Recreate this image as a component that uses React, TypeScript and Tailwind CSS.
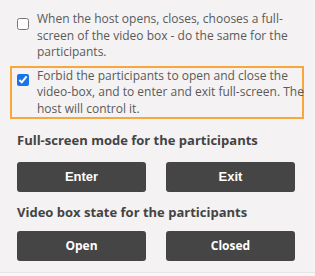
import { useState } from "react";

function Btn({ label, arial }: { label: string; arial?: boolean }) {
  return (
    <button
      className={`h-[30px] w-[129px] rounded-[3px] bg-[#454545] text-[12px] font-bold text-white ${
        arial ? "font-['Liberation_Sans',sans-serif] text-[13px]" : ""
      }`}
    >
      {label}
    </button>
  );
}

export default function App() {
  const [syncHost, setSyncHost] = useState(false);
  const [forbid, setForbid] = useState(true);

  return (
    <div className="h-[276px] w-[315px] overflow-hidden bg-[#f4f2f2] font-['Open_Sans',sans-serif] text-[#5a5a5a]">
      <div className="pt-[11px]">
        <label className="flex gap-[8px] pl-[17px] pr-[20px] text-[12px] leading-[16.5px]">
          <input
            type="checkbox"
            checked={syncHost}
            onChange={(e) => setSyncHost(e.target.checked)}
            className="mt-[7px] h-[12px] w-[12px] shrink-0 accent-[#1a73e8]"
          />
          <span>
            When the host opens, closes, chooses a full-screen of the video box - do the same for the
            participants.
          </span>
        </label>

        <label className="ml-[10px] mt-[5px] flex w-[294px] gap-[8px] border-2 border-[#f8a73d] pl-[5px] pr-0 text-[12px] leading-[16.5px]">
          <input
            type="checkbox"
            checked={forbid}
            onChange={(e) => setForbid(e.target.checked)}
            className="mt-[6px] h-[12px] w-[12px] shrink-0 accent-[#1a73e8]"
          />
          <span className="-mr-[2px]">
            Forbid the participants to open and close the video-box, and to enter and exit
            full-screen. The host will control it.
          </span>
        </label>

        <div className="px-[17px]">
          <h3 className="mt-[11px] text-[13px] font-bold leading-[20px] text-[#444]">
            Full-screen mode for the participants
          </h3>
          <div className="mt-[12px] flex gap-[20px]">
            <Btn label="Enter" arial />
            <Btn label="Exit" arial />
          </div>

          <h3 className="mt-[10px] text-[13px] font-bold leading-[20px] text-[#444]">
            Video box state for the participants
          </h3>
          <div className="mt-[9px] flex gap-[20px]">
            <Btn label="Open" />
            <Btn label="Closed" />
          </div>
        </div>
      </div>
      <div className="mt-[11px] h-[10px] border-t border-[#e6e4e4] bg-[#f9f8f8]" />
    </div>
  );
}
